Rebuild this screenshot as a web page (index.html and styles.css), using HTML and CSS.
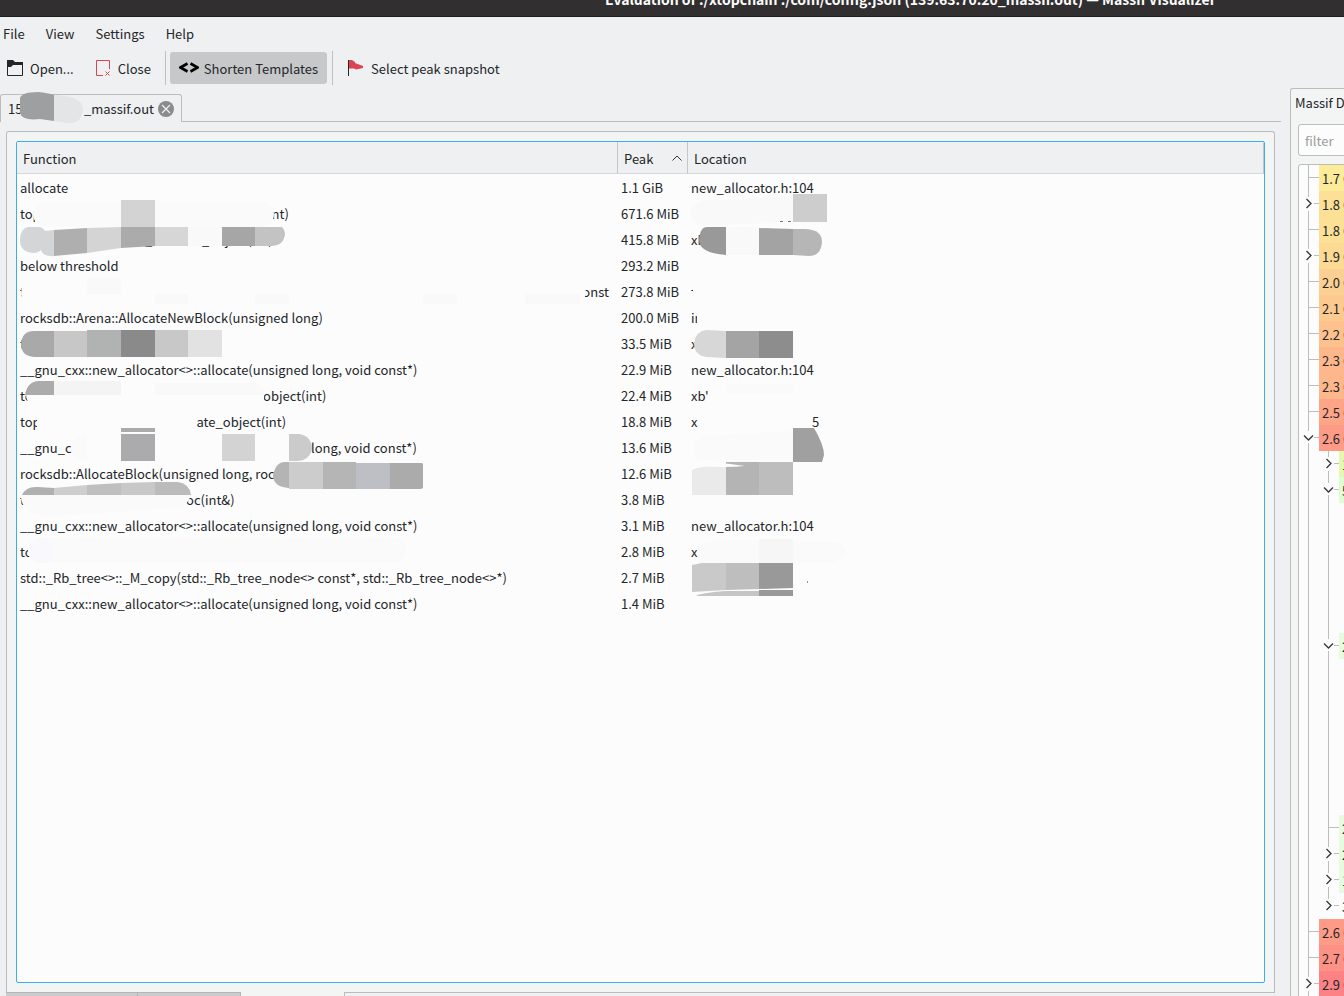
FILE: index.html
```html
<!DOCTYPE html>
<html lang="en">
<head>
<meta charset="utf-8">
<title>Massif Visualizer</title>
<link rel="stylesheet" href="styles.css">
</head>
<body>
<svg class="defs" aria-hidden="true">
  <symbol id="line" viewBox="0 0 20 26"><path d="M9.5 0V26"/></symbol>
  <symbol id="branch" viewBox="0 0 20 26"><path d="M9.5 0V26M9.5 12.5H20"/></symbol>
  <symbol id="closed" viewBox="0 0 20 26"><path d="M9.5 0V6M9.5 20V26M15 12.5H20"/><path class="chev" d="M7.5 8L12 12.5L7.5 17"/></symbol>
  <symbol id="closed-last" viewBox="0 0 20 26"><path d="M9.5 0V6M15 12.5H20"/><path class="chev" d="M7.5 8L12 12.5L7.5 17"/></symbol>
  <symbol id="open" viewBox="0 0 20 26"><path d="M9.5 0V6M9.5 18V26M15 12.5H20"/><path class="chev" d="M5 10.5L9.5 15L14 10.5"/></symbol>
</svg>
<div class="window">
  <header class="titlebar"><h1>Evaluation of ./xtopchain ./com/config.json (139.63.70.20_massif.out) — Massif Visualizer</h1></header>
  <nav class="menubar">
    <button type="button">File</button><button type="button">View</button><button type="button">Settings</button><button type="button">Help</button>
  </nav>
  <div class="toolbar">
    <button type="button" class="tool">
      <svg width="16" height="16" viewBox="0 0 16 16"><path fill="#232629" d="M0 0H6L8 2H16V5H6L4 7H0Z"/><path fill="none" stroke="#232629" d="M.5 4V15.5H15.5V3"/></svg><span>Open...</span></button>
    <button type="button" class="tool close-tool">
      <svg width="16" height="16" viewBox="0 0 16 16"><path fill="none" stroke="#da4453" d="M8 15.5H1.5V.5H14.5V9M10.5 11.5L14.5 15.5M14.5 11.5L10.5 15.5"/></svg><span>Close</span></button>
    <span class="separator"></span>
    <button type="button" class="tool pressed" aria-pressed="true">
      <svg width="20" height="16" viewBox="0 0 20 16"><path fill="none" stroke="#000" stroke-width="2.6" d="M8.5 3.5L1.5 7.5L8.5 11.5M11.5 3.5L18.5 7.5L11.5 11.5"/></svg><span>Shorten Templates</span></button>
    <span class="separator"></span>
    <button type="button" class="tool flag-tool">
      <svg width="16" height="16" viewBox="0 0 16 16"><path fill="#da4453" d="M1 0H4L7 2V3L15 6V8L8 9.5L6 8.5H1Z"/><path stroke="#232629" d="M.5 0V16"/></svg><span>Select peak snapshot</span></button>
  </div>
  <div class="workspace">
    <main class="main">
      <div class="tabbar">
        <div class="tab">
          <span class="tab-lead">15</span><span>_massif.out</span>
          <button type="button" class="tab-close" aria-label="Close tab"><svg width="16" height="16" viewBox="0 0 16 16"><circle cx="8" cy="8" r="8" fill="#898b8d"/><path stroke="#eff0f1" stroke-width="1.2" d="M4 4L12 12M12 4L4 12"/></svg></button>
          <svg class="tab-mask" width="66" height="32" viewBox="18 92 66 32" aria-hidden="true"><path fill="#e4e5e7" d="M54 95Q83 96 83 109Q82 124 68 123L54 121Z"/><path fill="#9e9fa1" d="M20 98Q22 92 38 92Q48 93 54 95V121L40 119Q22 121 20 113Z"/></svg>
        </div>
      </div>
      <section class="panel">
        <div class="table-view">
          <table>
            <colgroup><col class="col-function"><col class="col-peak"><col></colgroup>
            <thead><tr><th>Function</th><th>Peak<svg class="sort" width="10" height="6" viewBox="0 0 10 6"><path fill="none" stroke="#31363b" d="M.5 5.5L5 1L9.5 5.5"/></svg></th><th>Location</th></tr></thead>
            <tbody>
              <tr><td>allocate</td><td>1.1 GiB</td><td>new_allocator.h:104</td></tr>
              <tr><td><span class="lead w-248">top</span>int)</td><td>671.6 MiB</td><td></td></tr>
              <tr><td><span class="lead w-125"></span><span class="lead w-57">_</span>_object(int)</td><td>415.8 MiB</td><td>xb</td></tr>
              <tr><td>below threshold</td><td>293.2 MiB</td><td></td></tr>
              <tr><td><span class="lead w-556">t</span>const</td><td>273.8 MiB</td><td>t</td></tr>
              <tr><td>rocksdb::Arena::AllocateNewBlock(unsigned long)</td><td>200.0 MiB</td><td>in</td></tr>
              <tr><td>t</td><td>33.5 MiB</td><td>x</td></tr>
              <tr><td>__gnu_cxx::new_allocator&lt;&gt;::allocate(unsigned long, void const*)</td><td>22.9 MiB</td><td>new_allocator.h:104</td></tr>
              <tr><td><span class="lead w-243">to</span>object(int)</td><td>22.4 MiB</td><td>xb'</td></tr>
              <tr><td><span class="lead w-170">top</span>cate_object(int)</td><td>18.8 MiB</td><td><span class="lead w-121">x</span>5</td></tr>
              <tr><td><span class="lead w-291">__gnu_cx</span>long, void const*)</td><td>13.6 MiB</td><td></td></tr>
              <tr><td>rocksdb::AllocateBlock(unsigned long, rocks</td><td>12.6 MiB</td><td></td></tr>
              <tr><td><span class="lead w-166">t</span>oc(int&amp;)</td><td>3.8 MiB</td><td></td></tr>
              <tr><td>__gnu_cxx::new_allocator&lt;&gt;::allocate(unsigned long, void const*)</td><td>3.1 MiB</td><td>new_allocator.h:104</td></tr>
              <tr><td>to</td><td>2.8 MiB</td><td>x</td></tr>
              <tr><td>std::_Rb_tree&lt;&gt;::_M_copy(std::_Rb_tree_node&lt;&gt; const*, std::_Rb_tree_node&lt;&gt;*)</td><td>2.7 MiB</td><td></td></tr>
              <tr><td>__gnu_cxx::new_allocator&lt;&gt;::allocate(unsigned long, void const*)</td><td>1.4 MiB</td><td></td></tr>
            </tbody>
          </table>
          <svg class="masks" width="850" height="480" viewBox="17 142 850 480" aria-hidden="true">
            <rect x="33" y="201" width="241" height="26" rx="13" fill="#fafafa"/>
            <path fill="#d3d3d3" d="M121 200H155V227H121Z"/>
            <path fill="#fcfcfc" d="M155 227H274V233H155Z"/>
            <path fill="#d4d5d7" d="M28 227H38Q43 227 45 231L54 230V256Q43 257 41 250Q38 253 33 253Q20 252 20 240Q20 229 28 227Z"/>
            <path fill="#afafaf" d="M54 230L87 228V253L54 256Z"/><path fill="#d4d4d4" d="M87 228L121 227V248L87 253Z"/>
            <path fill="#ababab" d="M121 227H155V246L121 248Z"/><path fill="#d6d6d6" d="M155 227H188V246H155Z"/>
            <path fill="#f9f9f9" d="M188 227H222V246H188Z"/><path fill="#a6a6a6" d="M222 227H255V246H222Z"/>
            <path fill="#c3c3c3" d="M255 227H282Q285 230 285 235Q283 246 272 246H255Z"/>
            <path fill="#fcfcfc" d="M23 278H583Q588 290 584 300L575 305H40Q23 304 21 294Z"/>
            <path fill="#f9f9f9" d="M87 278H121V294H87ZM155 294H188V304H155ZM255 294H289V304H255ZM423 294H457V304H423ZM525 294H580V304H525Z"/>
            <path fill="#a9a9a9" d="M54 331V357H34Q21 356 21 344Q22 331 34 331Z"/><path fill="#c7c7c7" d="M54 331H87V357H54Z"/>
            <path fill="#b0b3b1" d="M87 330H121V357H87Z"/><path fill="#8a8a8a" d="M121 330H155V357H121Z"/>
            <path fill="#c8c8c8" d="M155 330H188V357H155Z"/><path fill="#e2e2e2" d="M188 330H222V357H188Z"/>
            <path fill="#fcfcfc" d="M26 394H264V408H34Q26 403 26 394Z"/>
            <path fill="#ababab" d="M54 381V395H25Q27 382 38 381Z"/>
            <path fill="#f4f4f4" d="M54 381H121V395H54Z"/><path fill="#f9f9f9" d="M155 383H255Q264 386 265 395H155Z"/>
            <path fill="#fcfcfc" d="M37 410H197V430H37Z"/>
            <path fill="#ababad" d="M121 428H155V432H121ZM121 434H155V461H121Z"/>
            <path fill="#fafafa" d="M87 434V461Q72 460 71 449Q71 437 87 434Z"/>
            <path fill="#fcfcfc" d="M155 434H222V461H155Z"/>
            <path fill="#d3d3d3" d="M222 434H255V461H222Z"/>
            <path fill="#cbcbcb" d="M289 434H300Q312 437 312 449Q309 461 297 461H289Z"/>
            <path fill="#b4b4b4" d="M289 462V488Q273 487 273 475Q276 462 285 462Z"/><path fill="#cccccc" d="M289 462H323V489H289Z"/>
            <path fill="#b5b5b5" d="M323 462H356V489H323Z"/><path fill="#bebec5" d="M356 463H390V489H356Z"/><path fill="#ababab" d="M390 463H422L423 464V488L421 489H390Z"/>
            <path fill="#fafafa" d="M21 495H191Q187 507 178 508L54 516Q20 515 21 495Z"/>
            <path fill="#b0b0b0" d="M22 495Q26 486 38 487L54 488V495Z"/><path fill="#cecece" d="M54 488L87 485V495H54Z"/>
            <path fill="#bfbfbf" d="M87 485L121 483V495H87Z"/><path fill="#c8c8c8" d="M121 483L155 482V495H121Z"/><path fill="#bbbbbb" d="M155 482H178Q190 484 191 495H155Z"/>
            <rect x="28" y="538" width="378" height="25" rx="12" fill="#fafafa"/>
            <path fill="#f9f9fd" d="M54 538V563H40Q28 560 28 550Q30 539 40 538Z"/>
            <path fill="#f9f9f9" d="M793 196L727 200Q692 197 690 212Q691 224 703 226L793 222Z"/>
            <path fill="#cdcdcd" d="M793 194H827V222H793Z"/><path fill="#777" d="M780 221H783V222H780ZM788 221H791V222H788Z"/>
            <path fill="#999999" d="M726 227V255Q699 253 699 240Q700 227 707 227Z"/><path fill="#f9f9f9" d="M726 227H759V255H726Z"/>
            <path fill="#a3a3a3" d="M759 228L793 229V255H759Z"/><path fill="#b6b6b6" d="M793 229H806Q822 230 822 242Q821 256 809 256L793 255Z"/>
            <path fill="#fcfcfc" d="M690 291H700V302H690ZM697 310H710V330H697ZM690 284H700V290H690ZM693 284H700V300H693Z"/>
            <path fill="#d7d7d7" d="M726 331V358L706 357Q694 355 694 343Q696 331 706 330Z"/><path fill="#a4a4a4" d="M726 331H759V358H726Z"/><path fill="#8d8d8d" d="M759 331H793V358H759Z"/>
            <path fill="#fafafa" d="M726 384H793V394H726ZM693 452Q692 439 704 436L793 431V461L697 460Z"/>
            <path fill="#a0a0a0" d="M793 428H814Q824 445 824 455L822 462H793Z"/>
            <path fill="#eaeaea" d="M692 470Q700 465 726 467V495H692Z"/><path fill="#b4b4b4" d="M726 462H759V495H726Z"/><path fill="#bdbdbd" d="M759 462H793V495H759Z"/>
            <path fill="#fcfcfc" d="M694 464Q718 461 745 466Q726 468 706 466Z"/>
            <path fill="#fafafa" d="M697 550Q700 541 726 540H759V563H699ZM793 541H836Q847 546 846 554Q840 563 825 563H793Z"/><path fill="#f6f6f6" d="M759 539H793V563H759Z"/>
            <path fill="#c9c9c9" d="M692 565L702 563H726V590L692 592Z"/><path fill="#bebebe" d="M726 563H759V589L726 590Z"/><path fill="#999999" d="M759 563H793V588L759 589Z"/>
            <path fill="#8a97ad" d="M807 581H808V583H807Z"/>
            <path fill="#c5c5c5" d="M696 596Q699 593 726 591H759V596Z"/><path fill="#999999" d="M759 590H793V596H759Z"/>
          </svg>
        </div>
      </section>
      <div class="bottom-tabs">
        <button type="button" class="bottom-tab w-131" aria-label="Chart"></button><button type="button" class="bottom-tab w-103" aria-label="Details"></button><button type="button" class="bottom-tab current" aria-label="Allocators"></button><span class="bottom-rest"></span>
      </div>
    </main>
    <aside class="dock">
      <h2>Massif Data</h2>
      <input type="text" placeholder="filter" aria-label="filter">
      <ul class="tree">
        <li><svg><use href="#branch"/></svg><span class="c17">1.7 GiB</span></li>
        <li><svg><use href="#closed"/></svg><span class="c18">1.8 GiB</span></li>
        <li><svg><use href="#branch"/></svg><span class="c18">1.8 GiB</span></li>
        <li><svg><use href="#closed"/></svg><span class="c19">1.9 GiB</span></li>
        <li><svg><use href="#branch"/></svg><span class="c20">2.0 GiB</span></li>
        <li><svg><use href="#branch"/></svg><span class="c21">2.1 GiB</span></li>
        <li><svg><use href="#branch"/></svg><span class="c22">2.2 GiB</span></li>
        <li><svg><use href="#branch"/></svg><span class="c23">2.3 GiB</span></li>
        <li><svg><use href="#branch"/></svg><span class="c23">2.3 GiB</span></li>
        <li><svg><use href="#branch"/></svg><span class="c25">2.5 GiB</span></li>
        <li><svg><use href="#open"/></svg><span class="c26">2.6 GiB</span></li>
        <li><svg><use href="#line"/></svg><svg><use href="#closed"/></svg><span class="g1">1</span></li>
        <li><svg><use href="#line"/></svg><svg><use href="#open"/></svg><span class="g2">5</span></li>
        <li><svg><use href="#line"/></svg><svg><use href="#line"/></svg></li>
        <li><svg><use href="#line"/></svg><svg><use href="#line"/></svg></li>
        <li><svg><use href="#line"/></svg><svg><use href="#line"/></svg></li>
        <li><svg><use href="#line"/></svg><svg><use href="#line"/></svg></li>
        <li><svg><use href="#line"/></svg><svg><use href="#line"/></svg></li>
        <li><svg><use href="#line"/></svg><svg><use href="#open"/></svg><span class="g3">2</span></li>
        <li><svg><use href="#line"/></svg><svg><use href="#line"/></svg></li>
        <li><svg><use href="#line"/></svg><svg><use href="#line"/></svg></li>
        <li><svg><use href="#line"/></svg><svg><use href="#line"/></svg></li>
        <li><svg><use href="#line"/></svg><svg><use href="#line"/></svg></li>
        <li><svg><use href="#line"/></svg><svg><use href="#line"/></svg></li>
        <li><svg><use href="#line"/></svg><svg><use href="#line"/></svg></li>
        <li><svg><use href="#line"/></svg><svg><use href="#branch"/></svg><span class="g3">2</span></li>
        <li><svg><use href="#line"/></svg><svg><use href="#closed"/></svg><span class="g3">2</span></li>
        <li><svg><use href="#line"/></svg><svg><use href="#closed"/></svg><span class="g3">1</span></li>
        <li><svg><use href="#line"/></svg><svg><use href="#closed-last"/></svg><span>3</span></li>
        <li><svg><use href="#branch"/></svg><span class="c26">2.6 GiB</span></li>
        <li><svg><use href="#branch"/></svg><span class="c27">2.7 GiB</span></li>
        <li><svg><use href="#closed"/></svg><span class="c29">2.9 GiB</span></li>
      </ul>
    </aside>
  </div>
</div>
</body>
</html>
```
FILE: styles.css
```css
* { box-sizing: border-box; }
body {
  margin: 0;
  overflow: hidden;
  background: #eff0f1;
  color: #232629;
  font: 13px/20px "Noto Sans CJK SC", "Noto Sans", sans-serif;
}
button { margin: 0; padding: 0; border: 0; background: none; color: inherit; font: inherit; }
svg { display: block; flex: none; }
.defs { position: absolute; width: 0; height: 0; }
.window { display: flex; flex-direction: column; height: 100vh; }

.titlebar { flex: none; height: 17px; overflow: hidden; background: #322f30; border-bottom: 1px solid #1d1e20; color: #fcfcfc; }
.titlebar h1 { margin: -11px 0 0 605px; font-size: 14px; line-height: 20px; white-space: nowrap; }

.menubar { flex: none; display: flex; align-items: center; gap: 21px; height: 34px; padding-left: 3px; }
.toolbar { flex: none; display: flex; align-items: flex-start; height: 36px; padding-left: 1px; }
.tool { display: flex; align-items: center; gap: 7px; height: 34px; padding: 0 8px 0 6px; white-space: nowrap; }
.tool span { padding-top: 2px; }
.close-tool { margin-left: 7px; padding-right: 14px; }
.separator { width: 1px; height: 34px; background: #bdbfc1; }
.pressed { height: 32px; margin: 1px 5px 0 4px; padding: 0 9px; gap: 5px; border-radius: 3px; background: #c7c8ca; }
.flag-tool { margin-left: 9px; }

.workspace { flex: 1; display: flex; min-height: 0; }
.main { flex: 1; min-width: 0; display: flex; flex-direction: column; padding-top: 7px; }
.tabbar { flex: none; display: flex; height: 28px; }
.tabbar::after { content: ""; flex: 1; border-bottom: 1px solid #bbbdbf; }
.tab { position: relative; display: flex; align-items: center; width: 182px; padding-left: 7px; border: 1px solid #bbbdbf; border-bottom: 0; border-radius: 3px 3px 0 0; white-space: nowrap; }
.tab-lead { width: 76px; }
.tab-close { margin-left: 4px; }
.tab-mask { position: absolute; left: 17px; top: -3px; }

.panel { flex: 1; min-height: 0; display: flex; margin: 9px 6px 0; padding: 9px; background: #f3f5f4; border: 1px solid #bbbdbc; border-bottom: 0; border-radius: 3px 3px 0 0; }
.table-view { position: relative; flex: 1; min-width: 0; overflow: hidden; background: #fcfcfc; border: 1px solid #3daee9; border-radius: 2px; }
table { width: 100%; table-layout: fixed; border-collapse: separate; border-spacing: 0; }
.col-function { width: 601px; }
.col-peak { width: 70px; }
th { height: 32px; padding: 2px 6px 0; background: #eff0f1; border-right: 1px solid #c4c6c8; border-bottom: 1px solid #d6d8d9; font-weight: 400; text-align: left; }
td { height: 26px; padding: 2px 3px 0; white-space: nowrap; }
.sort { float: right; margin-top: 6px; margin-right: -1px; }
.lead { display: inline-block; }
.w-57 { width: 57px; }
.w-121 { width: 121px; }
.w-125 { width: 125px; }
.w-166 { width: 166px; }
.w-170 { width: 170px; }
.w-243 { width: 243px; }
.w-248 { width: 248px; }
.w-291 { width: 291px; }
.w-556 { width: 556px; }
.masks { position: absolute; left: 0; top: 0; }

.bottom-tabs { flex: none; display: flex; height: 4px; margin: 0 6px; overflow: hidden; }
.bottom-tab { height: 4px; background: #cbcccd; border: solid #b3b5b6; border-width: 1px 1px 0 0; }
.w-131 { width: 132px; }
.w-103 { width: 103px; }
.bottom-tab.current { width: 103px; background: #f3f5f4; border: 0; }
.bottom-rest { flex: 1; border: solid #bbbdbc; border-width: 1px 0 0 1px; }

.dock { flex: 0 0 54px; margin: 1px 0 0 9px; padding-left: 7px; overflow: hidden; background: #f3f5f4; border: solid #bbbdbc; border-width: 1px 0 0 1px; border-radius: 3px 0 0 0; white-space: nowrap; }
.dock h2 { margin: 4px 0 11px -3px; font-size: 13px; line-height: 20px; font-weight: 400; }
.dock input { display: block; width: 200px; height: 32px; padding: 0 6px; background: #fcfcfc; border: 1px solid #bbbdbf; border-radius: 3px; color: inherit; font: inherit; }
.dock input::placeholder { color: #9b9d9f; opacity: 1; }
.tree { width: 200px; margin: 8px 0 0; padding: 0; list-style: none; background: #fcfcfc; border: 1px solid #bbbdbf; border-radius: 3px 0 0 0; }
.tree li { display: flex; height: 26px; line-height: 24px; }
.tree svg { width: 20px; height: 26px; fill: none; stroke: #bbbdbf; }
.tree .chev, .chev { stroke: #31363b; stroke-width: 1.3; }
.tree span { flex: 1; padding: 2px 0 0 3px; }
.c17 { background: #fceb98; }
.c18 { background: #fce096; }
.c19 { background: #fcda94; }
.c20 { background: #fcd092; }
.c21 { background: #fcc98f; }
.c22 { background: #fcc18d; }
.c23 { background: #fdb78b; }
.c25 { background: #fea588; }
.c26 { background: #fe9b86; }
.c27 { background: #fe9185; }
.c29 { background: #fd8286; }
.g1 { background: #e6f7b2; }
.g2 { background: #e2fcd2; }
.g3 { background: #e6fbdf; }
```
